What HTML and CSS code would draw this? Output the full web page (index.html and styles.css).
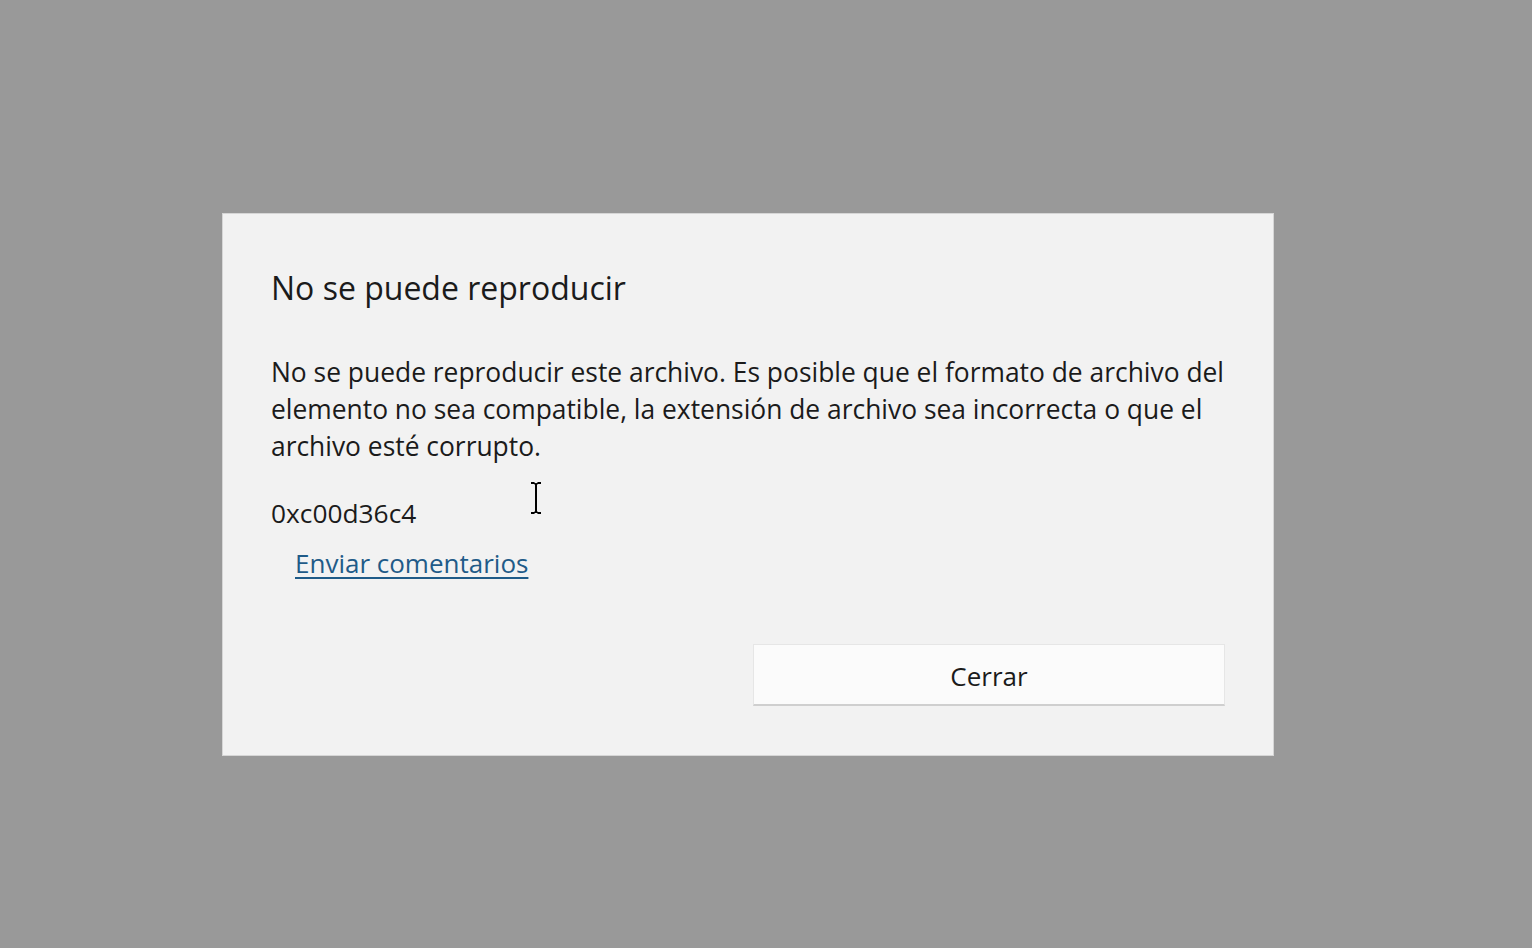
FILE: index.html
```html
<!DOCTYPE html>
<html lang="es">
<head>
    <meta charset="UTF-8">
    <meta name="viewport" content="width=device-width, initial-scale=1.0">
    <title>No se puede reproducir</title>
    <link rel="stylesheet" href="styles.css">
</head>
<body>
    <div class="dialog">
        <div class="dialog-title">No se puede reproducir</div>
        <div class="dialog-message">No se puede reproducir este archivo. Es posible que el formato de archivo del elemento no sea compatible, la extensión de archivo sea incorrecta o que el archivo esté corrupto.</div>
        <div class="error-code">0xc00d36c4</div>
        <a class="feedback-link" href="#">Enviar comentarios</a>
        <div class="dialog-actions">
            <button class="close-btn">Cerrar</button>
        </div>

        <svg class="text-cursor" width="12" height="32" viewBox="0 0 12 32">
            <path fill="none" stroke="#000" stroke-width="2" d="M1 1h3.5M7.5 1H11M6 2v28M1 31h3.5M7.5 31H11"/>
            <path fill="none" stroke="#000" stroke-width="1.5" d="M4 1.5c1 0 2 .5 2 1.5c0-1 1-1.5 2-1.5M4 30.5c1 0 2-.5 2-1.5c0 1 1 1.5 2 1.5"/>
        </svg>
    </div>
</body>
</html>
```

FILE: styles.css
```css
body {
    margin: 0;
    font-family: "Open Sans", "Noto Sans", sans-serif;
    background-color: #999999;
    color: #1b1b1b;
    height: 100vh;
    overflow: hidden;
    padding: 213px 0 0 222px;
    box-sizing: border-box;
}

.dialog {
    position: relative;
    width: 1052px;
    height: 543px;
    box-sizing: border-box;
    background-color: #f2f2f2;
    border: 1px solid #d6d6d6;
    padding: 54px 48px 0 48px;
    display: flex;
    flex-direction: column;
    align-items: flex-start;
}

.dialog-title {
    font-size: 32px;
    line-height: 40px;
    margin-bottom: 46px;
}

.dialog-message {
    width: 960px;
    font-size: 26.4px;
    line-height: 37px;
    margin-bottom: 30px;
}

.error-code {
    font-size: 26.3px;
    line-height: 37px;
    margin-bottom: 13px;
}

.feedback-link {
    font-size: 26px;
    line-height: 37px;
    margin-left: 24px;
    color: #1f5b88;
    text-decoration: underline;
    text-underline-offset: 4px;
}

.dialog-actions {
    align-self: stretch;
    display: flex;
    justify-content: flex-end;
    margin-top: 62px;
}

.close-btn {
    width: 472px;
    height: 62px;
    padding-top: 3px;
    background-color: #fbfbfb;
    border: 1px solid #e6e6e6;
    border-bottom: 2px solid #cfcfcf;
    font-family: inherit;
    font-size: 26px;
    color: #1b1b1b;
    cursor: pointer;
}

.text-cursor {
    position: absolute;
    left: 307px;
    top: 268px;
}
```
